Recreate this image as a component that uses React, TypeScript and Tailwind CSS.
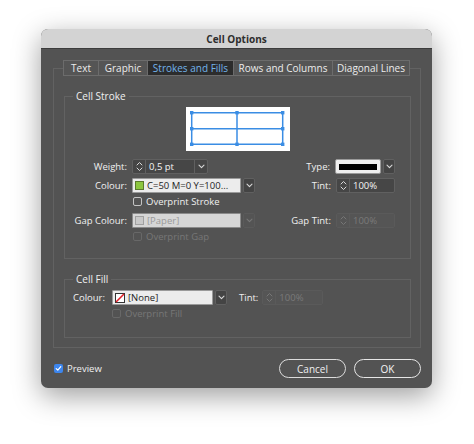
import React from "react";

const Chevron = ({ color = "#d8d8d8" }: { color?: string }) => (
  <svg width="7" height="5" viewBox="0 0 7 5" fill="none">
    <path d="M1 1.2 L3.5 3.7 L6 1.2" stroke={color} strokeWidth="1.1" strokeLinecap="round" strokeLinejoin="round" />
  </svg>
);

const Arrows = ({ color = "#d8d8d8" }: { color?: string }) => (
  <svg width="7" height="11" viewBox="0 0 7 11" fill="none">
    <path d="M1 4 L3.5 1.5 L6 4" stroke={color} strokeWidth="1" strokeLinecap="round" strokeLinejoin="round" />
    <path d="M1 7 L3.5 9.5 L6 7" stroke={color} strokeWidth="1" strokeLinecap="round" strokeLinejoin="round" />
  </svg>
);

const Spinner = ({
  value,
  width,
  chevron,
  disabled,
}: {
  value: string;
  width: string;
  chevron?: boolean;
  disabled?: boolean;
}) => (
  <div
    className={`flex h-[15px] ${width} border ${
      disabled ? "border-[#5a5a5a] bg-[#555555]" : "border-[#606060] bg-[#464646]"
    } rounded-[2px]`}
  >
    <div className={`flex w-[13px] items-center justify-center border-r ${disabled ? "border-[#5a5a5a]" : "border-[#606060]"}`}>
      <Arrows color={disabled ? "#777777" : "#d8d8d8"} />
    </div>
    <div className={`flex flex-1 items-center pl-[3px] ${disabled ? "text-[#7a7a7a]" : "text-[#f4f4f4]"}`}>{value}</div>
    {chevron && (
      <div className="flex w-[13px] items-center justify-center border-l border-[#606060]">
        <Chevron />
      </div>
    )}
  </div>
);

const ChevronButton = ({ disabled }: { disabled?: boolean }) => (
  <div
    className={`ml-[2px] flex h-[15px] w-[12px] items-center justify-center rounded-[2px] border ${
      disabled ? "border-[#5a5a5a] bg-[#545454]" : "border-[#606060] bg-[#444444]"
    }`}
  >
    <Chevron color={disabled ? "#777777" : "#d8d8d8"} />
  </div>
);

const Check = ({ disabled }: { disabled?: boolean }) => (
  <div
    className={`h-[9px] w-[9px] rounded-[2px] border ${disabled ? "border-[#686868]" : "border-[#c4c4c4]"}`}
  />
);

const Tab = ({ label, w, active, first }: { label: string; w: string; active?: boolean; first?: boolean }) => (
  <div
    className={`flex h-full ${w} items-center justify-center ${first ? "" : "border-l border-[#6c6c6c]"} ${
      active ? "bg-[#2c2c2c] text-[#72b3ea]" : "bg-[#555555] text-[#ececec]"
    }`}
  >
    {label}
  </div>
);

const Preview = () => {
  const xs = [5.7, 51, 96.7];
  const ys = [5.7, 21.7, 37.3];
  const pts: [number, number][] = [];
  xs.forEach((x) => ys.forEach((y) => pts.push([x, y])));
  return (
    <div className="mx-auto h-[44px] w-[104px] bg-white">
      <svg width="104" height="44" viewBox="0 0 104 44">
        {xs.map((x) => (
          <line key={"x" + x} x1={x} y1={ys[0]} x2={x} y2={ys[2]} stroke="#3a8de4" strokeWidth="1.5" />
        ))}
        {ys.map((y) => (
          <line key={"y" + y} x1={xs[0]} y1={y} x2={xs[2]} y2={y} stroke="#3a8de4" strokeWidth="1.5" />
        ))}
        {pts
          .filter(([x, y]) => !(x === 51 && y === 21.7))
          .map(([x, y]) => (
            <rect key={x + "-" + y} x={x - 1.7} y={y - 1.7} width="3.4" height="3.4" fill="#3a8de4" />
          ))}
      </svg>
    </div>
  );
};

export default function App() {
  return (
    <div
      className="h-[444px] w-[474px] bg-white pl-[41px] pt-[29px] text-[9.5px] leading-none"
      style={{ fontFamily: "'Open Sans', 'Noto Sans', sans-serif" }}
    >
      <div className="flex h-[359px] w-[391px] flex-col overflow-hidden rounded-[7px] bg-[#535353] shadow-[0_8px_28px_rgba(0,0,0,0.38)]">
        {/* title bar */}
        <div className="flex h-[20px] items-center justify-center border-b border-[#3c3c3c] bg-[#d3d3d3] text-[10px] font-bold text-[#2e2e2e]">
          Cell Options
        </div>

        {/* body */}
        <div className="flex flex-1 flex-col pl-[12px] pr-[11px]">
          <div className="mt-[19px] w-[368px] border border-[#626262] pb-[9px]">
            {/* tabs */}
            <div className="-mt-[9px] ml-[9px] flex h-[16px] w-[347px] border border-[#6c6c6c] text-[10px]">
              <Tab label="Text" w="w-[34px]" first />
              <Tab label="Graphic" w="w-[49px]" />
              <Tab label="Strokes and Fills" w="w-[86px]" active />
              <Tab label="Rows and Columns" w="w-[99px]" />
              <Tab label="Diagonal Lines" w="flex-1" />
            </div>

            {/* Cell Stroke */}
            <fieldset className="ml-[10px] mt-[13px] w-[347px] border border-[#626262] pb-[14px] pt-[4px]">
              <legend className="ml-[8px] px-[3px] text-[10px] leading-[14px] text-[#f0f0f0]">Cell Stroke</legend>
              <Preview />

              <div className="mt-[8px] flex h-[15px] items-center pr-[15px]">
                <div className="w-[62px] text-right text-[#f0f0f0]">Weight:</div>
                <div className="ml-[5px]">
                  <Spinner value="0,5 pt" width="w-[76px]" chevron />
                </div>
                <div className="flex-1" />
                <div className="w-[50px] text-right text-[#f0f0f0]">Type:</div>
                <div className="ml-[5px] flex">
                  <div className="flex h-[15px] w-[46px] items-center justify-center rounded-[2px] border border-[#9a9a9a] bg-[#f0f0f0]">
                    <div className="h-[6px] w-[38px] bg-black" />
                  </div>
                  <ChevronButton />
                </div>
              </div>

              <div className="mt-[4px] flex h-[15px] items-center pr-[15px]">
                <div className="w-[62px] text-right text-[#f0f0f0]">Colour:</div>
                <div className="ml-[5px] flex">
                  <div className="flex h-[15px] w-[109px] items-center rounded-[1px] border border-[#9a9a9a] bg-[#ececec] pl-[2px] text-[#1e1e1e]">
                    <div className="h-[9px] w-[9px] border border-[#5a7a2a] bg-[#8cc63e]" />
                    <span className="ml-[3px]">C=50 M=0 Y=100...</span>
                  </div>
                  <ChevronButton />
                </div>
                <div className="flex-1" />
                <div className="w-[50px] text-right text-[#f0f0f0]">Tint:</div>
                <div className="ml-[5px]">
                  <Spinner value="100%" width="w-[59px]" />
                </div>
              </div>

              <div className="mt-[1px] flex h-[15px] items-center">
                <div className="ml-[68px]">
                  <Check />
                </div>
                <span className="ml-[4px] text-[#f0f0f0]">Overprint Stroke</span>
              </div>

              <div className="mt-[4px] flex h-[15px] items-center pr-[15px]">
                <div className="w-[62px] text-right text-[#f0f0f0]">Gap Colour:</div>
                <div className="ml-[5px] flex">
                  <div className="flex h-[15px] w-[109px] items-center rounded-[1px] border border-[#8a8a8a] bg-[#d6d6d6] pl-[2px] text-[#9a9a9a]">
                    <div className="h-[9px] w-[9px] border border-[#a0a0a0] bg-[#c9c9c9]" />
                    <span className="ml-[3px]">[Paper]</span>
                  </div>
                  <ChevronButton disabled />
                </div>
                <div className="flex-1" />
                <div className="w-[50px] text-right text-[#f0f0f0]">Gap Tint:</div>
                <div className="ml-[5px]">
                  <Spinner value="100%" width="w-[59px]" disabled />
                </div>
              </div>

              <div className="mt-[1px] flex h-[15px] items-center">
                <div className="ml-[68px]">
                  <Check disabled />
                </div>
                <span className="ml-[4px] text-[#777777]">Overprint Gap</span>
              </div>
            </fieldset>

            {/* Cell Fill */}
            <fieldset className="ml-[10px] mt-[13px] w-[347px] border border-[#626262] pb-[16px] pt-[4px]">
              <legend className="ml-[8px] px-[3px] text-[10px] leading-[14px] text-[#f0f0f0]">Cell Fill</legend>
              <div className="flex h-[15px] items-center">
                <div className="w-[40px] text-right text-[#f0f0f0]">Colour:</div>
                <div className="ml-[7px] flex">
                  <div className="flex h-[15px] w-[101px] items-center rounded-[1px] border border-[#9a9a9a] bg-[#ececec] pl-[2px] text-[#1e1e1e]">
                    <svg width="10" height="10" viewBox="0 0 10 10">
                      <rect x="0.5" y="0.5" width="9" height="9" fill="white" stroke="#333" strokeWidth="1" />
                      <line x1="1" y1="9" x2="9" y2="1" stroke="#e0202a" strokeWidth="1.6" />
                    </svg>
                    <span className="ml-[3px]">[None]</span>
                  </div>
                  <ChevronButton />
                </div>
                <div className="ml-[12px] text-[#f0f0f0]">Tint:</div>
                <div className="ml-[4px]">
                  <Spinner value="100%" width="w-[61px]" disabled />
                </div>
              </div>
              <div className="mt-[1px] flex h-[15px] items-center">
                <div className="ml-[47px]">
                  <Check disabled />
                </div>
                <span className="ml-[4px] text-[#777777]">Overprint Fill</span>
              </div>
            </fieldset>
          </div>

          {/* footer */}
          <div className="mt-[11px] flex h-[19px] items-center">
            <div className="ml-[1px] flex h-[9px] w-[9px] items-center justify-center rounded-[2px] bg-[#3d86ee]">
              <svg width="7" height="7" viewBox="0 0 7 7" fill="none">
                <path d="M1.2 3.6 L2.8 5.2 L5.8 1.6" stroke="white" strokeWidth="1.2" strokeLinecap="round" strokeLinejoin="round" />
              </svg>
            </div>
            <span className="ml-[4px] text-[#f0f0f0]">Preview</span>
            <div className="flex-1" />
            <div className="flex h-[19px] w-[67px] items-center justify-center rounded-full border-[1.5px] border-[#dcdcdc] text-[10px] text-[#f0f0f0]">
              Cancel
            </div>
            <div className="ml-[8px] flex h-[19px] w-[67px] items-center justify-center rounded-full border-[1.5px] border-[#e6e6e6] text-[10px] text-[#f5f5f5]">
              OK
            </div>
          </div>
        </div>
      </div>
    </div>
  );
}
